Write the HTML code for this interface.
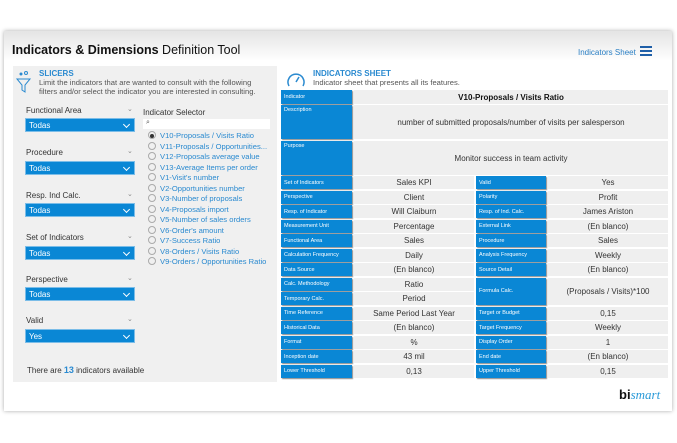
<!DOCTYPE html><html><head><style>
body{margin:0;width:677px;height:443px;background:#fff;font-family:"Liberation Sans",sans-serif;position:relative;overflow:hidden}
.a{position:absolute}
.card{left:4px;top:31px;width:668px;height:380px;background:#fff;box-shadow:0 0 4px #aaa}
.hdr{left:4px;top:31px;width:668px;height:30px;background:linear-gradient(#e4e4e4,#fff)}
.lp{left:13px;top:66px;width:264px;height:316px;background:#f0f0f0}
.rp{left:279px;top:66px;width:390px;height:316px;background:#fff}
.lab{font-size:8px;color:#333}
.dd{background:#0a87d5;color:#fff;font-size:8px;height:14px;line-height:14px;padding-left:3px;border:1px solid #7bbde8;box-sizing:border-box;width:110px}
.dd:after{content:"";position:absolute;right:5px;top:3px;width:4px;height:4px;border-right:1px solid #fff;border-bottom:1px solid #fff;transform:rotate(45deg)}
.ch{font-size:7px;color:#888}
.it{font-size:7.6px;color:#2a8ad0;left:148px;white-space:nowrap}
.it:before{content:"";display:inline-block;width:6px;height:6px;border:1px solid #aaa;border-radius:50%;margin-right:4px;vertical-align:-1px}
.bl{background:#0a87d5;color:#fff;font-size:5.5px;padding:0 3px;box-sizing:border-box;box-shadow:1px 1px 1px #888;display:flex;align-items:center}
.v{background:#efefef;color:#333;font-size:8px;text-align:center;box-sizing:border-box;display:flex;align-items:center;justify-content:center}
</style></head><body>
<div class="a card"></div><div class="a hdr"></div>
<div class="a" style="left:12px;top:43px;font-size:12.5px;color:#111"><b>Indicators &amp; Dimensions</b> Definition Tool</div>
<div class="a" style="left:578px;top:48px;font-size:8px;color:#2a7fc4">Indicators Sheet</div>
<div class="a" style="left:640px;top:46px;width:12px;height:2px;background:#1f5fa8;box-shadow:0 4px 0 #1f5fa8,0 8px 0 #1f5fa8"></div>
<div class="a lp"></div><div class="a rp"></div>
<svg class="a" style="left:15px;top:70px" width="18" height="24"><path d="M2 9h13l-5 6v7l-3-2v-5z" fill="none" stroke="#2a8ad0"/><circle cx="6" cy="4" r="1.5" fill="#2a8ad0"/><circle cx="11" cy="3" r="1.5" fill="none" stroke="#2a8ad0"/></svg>
<div class="a" style="left:39px;top:69px;font-size:8px;color:#2a8ad0;font-weight:bold">SLICERS</div>
<div class="a" style="left:39px;top:78px;font-size:7.6px;color:#555;line-height:9px;width:230px">Limit the indicators that are wanted to consult with the following filters and/or select the indicator you are interested in consulting.</div>
<div class="a lab" style="left:26px;top:106px">Functional Area</div><div class="a ch" style="left:127px;top:105px">⌄</div><div class="a dd" style="left:25px;top:118px">Todas</div>
<div class="a lab" style="left:26px;top:148px">Procedure</div><div class="a ch" style="left:127px;top:147px">⌄</div><div class="a dd" style="left:25px;top:161px">Todas</div>
<div class="a lab" style="left:26px;top:191px">Resp. Ind Calc.</div><div class="a ch" style="left:127px;top:190px">⌄</div><div class="a dd" style="left:25px;top:203px">Todas</div>
<div class="a lab" style="left:26px;top:233px">Set of Indicators</div><div class="a ch" style="left:127px;top:232px">⌄</div><div class="a dd" style="left:25px;top:246px">Todas</div>
<div class="a lab" style="left:26px;top:275px">Perspective</div><div class="a ch" style="left:127px;top:274px">⌄</div><div class="a dd" style="left:25px;top:287px">Todas</div>
<div class="a lab" style="left:26px;top:316px">Valid</div><div class="a ch" style="left:127px;top:315px">⌄</div><div class="a dd" style="left:25px;top:329px">Yes</div>
<div class="a lab" style="left:27px;top:365px">There are <b style="color:#2a8ad0;font-size:9px">13</b> indicators available</div>
<div class="a lab" style="left:143px;top:108px">Indicator Selector</div>
<div class="a" style="left:143px;top:119px;width:124px;height:10px;background:#fff;font-size:7px;color:#555;padding-left:3px">⌕</div>
<div class="a it" style="top:131px">V10-Proposals / Visits Ratio</div>
<div class="a it" style="top:141.5px">V11-Proposals / Opportunities...</div>
<div class="a it" style="top:152px">V12-Proposals average value</div>
<div class="a it" style="top:162.5px">V13-Average Items per order</div>
<div class="a it" style="top:173px">V1-Visit's number</div>
<div class="a it" style="top:183.5px">V2-Opportunities number</div>
<div class="a it" style="top:194px">V3-Number of proposals</div>
<div class="a it" style="top:204.5px">V4-Proposals import</div>
<div class="a it" style="top:215px">V5-Number of sales orders</div>
<div class="a it" style="top:225.5px">V6-Order's amount</div>
<div class="a it" style="top:236px">V7-Success Ratio</div>
<div class="a it" style="top:246.5px">V8-Orders / Visits Ratio</div>
<div class="a it" style="top:257px">V9-Orders / Opportunities Ratio</div>
<div class="a" style="left:150px;top:134px;width:4px;height:4px;background:#333;border-radius:50%"></div>
<svg class="a" style="left:286px;top:70px" width="20" height="18"><path d="M3 16A8 8 0 1 1 17 16" fill="none" stroke="#2a8ad0" stroke-width="1.5"/><path d="M10 12l3-5" stroke="#2a8ad0" stroke-width="1.5"/></svg>
<div class="a" style="left:313px;top:69px;font-size:8px;color:#2a8ad0;font-weight:bold">INDICATORS SHEET</div>
<div class="a" style="left:313px;top:78px;font-size:7.6px;color:#555">Indicator sheet that presents all its features.</div>
<div class="a bl" style="left:281px;top:90px;width:71px;height:14px">Indicator</div>
<div class="a v" style="left:354px;top:90px;width:314px;height:14px;font-weight:bold;color:#111">V10-Proposals / Visits Ratio</div>
<div class="a bl" style="left:281px;top:105px;width:71px;height:34px;align-items:flex-start;padding-top:2px">Description</div>
<div class="a v" style="left:354px;top:105px;width:314px;height:34px">number of submitted proposals/number of visits per salesperson</div>
<div class="a bl" style="left:281px;top:141px;width:71px;height:34px;align-items:flex-start;padding-top:2px">Purpose</div>
<div class="a v" style="left:354px;top:141px;width:314px;height:34px">Monitor success in team activity</div>
<div id="t"></div>
<script>
var L=[["Set of Indicators","Sales KPI","Valid","Yes"],["Perspective","Client","Polarity","Profit"],["Resp. of Indicator","Will Claiburn","Resp. of Ind. Calc.","James Ariston"],["Measurement Unit","Percentage","External Link","(En blanco)"],["Functional Area","Sales","Procedure","Sales"],["Calculation Frequency","Daily","Analysis Frequency","Weekly"],["Data Source","(En blanco)","Source Detail","(En blanco)"],["Calc. Methodology","Ratio","",""],["Temporary Calc.","Period",null,null],["Time Reference","Same Period Last Year","Target or Budget","0,15"],["Historical Data","(En blanco)","Target Frequency","Weekly"],["Format","%","Display Order","1"],["Inception date","43 mil","End date","(En blanco)"],["Lower Threshold","0,13","Upper Threshold","0,15"]];
var h="";L.forEach(function(r,i){var y=176+i*14.5;
h+='<div class="a bl" style="left:281px;top:'+y+'px;width:71px;height:13px">'+r[0]+'</div><div class="a v" style="left:354px;top:'+y+'px;width:120px;height:13px">'+r[1]+'</div>';
if(i==7){h+='<div class="a bl" style="left:476px;top:'+y+'px;width:70px;height:27.5px">Formula Calc.</div><div class="a v" style="left:548px;top:'+y+'px;width:120px;height:27.5px">(Proposals / Visits)*100</div>';}
else if(r[2]!==null){h+='<div class="a bl" style="left:476px;top:'+y+'px;width:70px;height:13px">'+r[2]+'</div><div class="a v" style="left:548px;top:'+y+'px;width:120px;height:13px">'+r[3]+'</div>';}
});document.getElementById("t").innerHTML=h;
</script>
<div class="a" style="left:619px;top:387px;font-size:13px;font-weight:bold;color:#111">bi<span style="color:#2a9ad8;font-style:italic;font-weight:normal;font-family:'Liberation Serif',serif">smart</span></div>
</body></html>
